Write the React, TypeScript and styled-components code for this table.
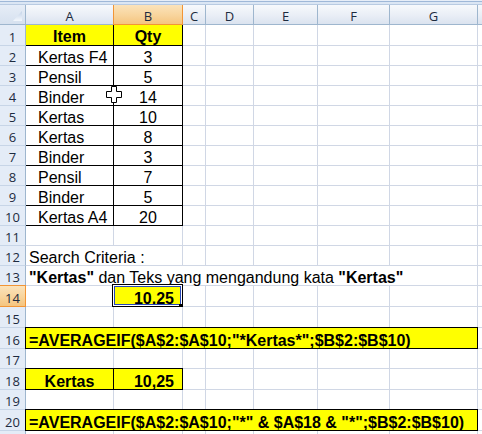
import React from 'react';
import styled, { createGlobalStyle, css } from 'styled-components';

const Global = createGlobalStyle`
  html, body { margin: 0; padding: 0; background: #fff; }
  body { width: 482px; height: 434px; overflow: hidden; }
`;

const ROW_H = [21, 20, 20, 20, 20, 20, 20, 20, 20, 20, 20, 20, 20, 21, 21, 21, 20, 21, 20, 21, 20];

const GRID = '#d0d7e5';
const HEAD_LINE = '#9eb6ce';
const SEL_LINE = '#f29536';
const SEL_BG = 'linear-gradient(180deg, #fbe3bb 0%, #f8d49c 55%, #f5c57f 100%)';

const Sheet = styled.div`
  position: relative;
  width: 482px;
  height: 434px;
  overflow: hidden;
  background: #fff;
`;

const TopStrip = styled.div`
  height: 5px;
  background: linear-gradient(
    180deg,
    #e7eef8 0px,
    #e7eef8 1px,
    #9fb8d8 1px,
    #9fb8d8 2px,
    #dbe6f4 2px,
    #dbe6f4 4px,
    #b9cbe2 4px,
    #b9cbe2 5px
  );
`;

const Grid = styled.div`
  display: grid;
  width: 498px;
  grid-template-columns: 26px 88px 69px 23px 48px 64px 72px 88px 20px;
  grid-template-rows: 20px ${ROW_H.map((h) => `${h}px`).join(' ')};
`;

const Corner = styled.div`
  box-sizing: border-box;
  border-right: 1px solid ${HEAD_LINE};
  border-bottom: 1px solid ${HEAD_LINE};
  background: linear-gradient(180deg, #e6edf7 0%, #d6e1ef 100%);
  display: flex;
  align-items: flex-end;
  justify-content: flex-end;
  padding: 0 3px 3px 0;
`;

const ColHead = styled.div<{ $active?: boolean }>`
  box-sizing: border-box;
  border-right: 1px solid ${(p) => (p.$active ? SEL_LINE : HEAD_LINE)};
  border-bottom: 1px solid ${(p) => (p.$active ? SEL_LINE : HEAD_LINE)};
  background: ${(p) =>
    p.$active ? SEL_BG : 'linear-gradient(180deg, #f7f9fc 0%, #e9eef6 55%, #dbe3ef 100%)'};
  ${(p) => p.$active && css`box-shadow: -1px 0 0 ${SEL_LINE};`}
  display: flex;
  align-items: center;
  justify-content: center;
  padding-top: 2px;
  font-family: 'Open Sans', 'Liberation Sans', sans-serif;
  font-size: 13px;
  color: #1d2b40;
`;

const RowHead = styled.div<{ $active?: boolean }>`
  box-sizing: border-box;
  border-right: 1px solid ${(p) => (p.$active ? SEL_LINE : HEAD_LINE)};
  border-bottom: 1px solid ${(p) => (p.$active ? SEL_LINE : '#c7d5e7')};
  background: ${(p) => (p.$active ? SEL_BG : '#e4ecf7')};
  ${(p) => p.$active && css`box-shadow: 0 -1px 0 ${SEL_LINE};`}
  display: flex;
  align-items: center;
  justify-content: center;
  padding-top: 3px;
  font-family: 'Open Sans', 'Liberation Sans', sans-serif;
  font-size: 13px;
  color: #1d2b40;
`;

type Align = 'left' | 'center' | 'right';

interface CellProps {
  $span?: number;
  $fill?: string;
  $bold?: boolean;
  $align?: Align;
  $pl?: number;
  $pr?: number;
  $pb?: number;
  $edge?: boolean;
  $edgeTop?: boolean;
  $edgeLeft?: boolean;
}

const Cell = styled.div<CellProps>`
  position: relative;
  grid-column: span ${(p) => p.$span ?? 1};
  box-sizing: border-box;
  min-width: 0;
  border-right: 1px solid ${(p) => (p.$edge ? '#000' : GRID)};
  border-bottom: 1px solid ${(p) => (p.$edge ? '#000' : GRID)};
  background: ${(p) => p.$fill ?? '#fff'};
  display: flex;
  align-items: flex-end;
  justify-content: ${(p) =>
    p.$align === 'center' ? 'center' : p.$align === 'right' ? 'flex-end' : 'flex-start'};
  padding: 0 ${(p) => p.$pr ?? 3}px ${(p) => p.$pb ?? 0}px ${(p) => p.$pl ?? 3}px;
  font-family: 'Liberation Sans', Arial, sans-serif;
  font-size: 16px;
  line-height: 15px;
  font-weight: ${(p) => (p.$bold ? 700 : 400)};
  color: #000;
  white-space: nowrap;
  ${(p) => {
    const s: string[] = [];
    if (p.$edgeTop) s.push('0 -1px 0 #000');
    if (p.$edgeLeft) s.push('-1px 0 0 #000');
    if (p.$edgeTop && p.$edgeLeft) s.push('-1px -1px 0 #000');
    return s.length ? css`box-shadow: ${s.join(', ')};` : '';
  }}
`;

const Strong = styled.b`
  font-weight: 700;
`;

const ActiveFrame = styled.div`
  position: absolute;
  left: -2px;
  top: -2px;
  right: -1px;
  bottom: -1px;
  border: 1px solid #000;
  box-shadow: inset 0 0 0 1px #fff, inset 0 0 0 2px #2747b8;
  pointer-events: none;
`;

const FillHandle = styled.span`
  position: absolute;
  right: -2px;
  bottom: -3px;
  width: 5px;
  height: 5px;
  background: #000;
`;

const Cursor = styled.svg`
  position: absolute;
  left: 106px;
  top: 86px;
  pointer-events: none;
`;

const YELLOW = '#ffff00';
const LETTERS = ['A', 'B', 'C', 'D', 'E', 'F', 'G', ''];

const items: [string, number][] = [
  ['Kertas F4', 3],
  ['Pensil', 5],
  ['Binder', 14],
  ['Kertas', 10],
  ['Kertas', 8],
  ['Binder', 3],
  ['Pensil', 7],
  ['Binder', 5],
  ['Kertas A4', 20],
];

const Blanks: React.FC<{ n: number; k: string }> = ({ n, k }) => (
  <>
    {Array.from({ length: n }, (_, i) => (
      <Cell key={`${k}-${i}`} />
    ))}
  </>
);

export default function App() {
  return (
    <Sheet>
      <Global />
      <TopStrip />
      <Grid>
        <Corner>
          <svg width="9" height="10" viewBox="0 0 9 10">
            <defs>
              <linearGradient id="tri" x1="0" y1="0" x2="0" y2="1">
                <stop offset="0" stopColor="#c3d3e8" />
                <stop offset="1" stopColor="#f3f7fc" />
              </linearGradient>
            </defs>
            <polygon points="9,0 9,10 0,10" fill="url(#tri)" />
          </svg>
        </Corner>
        {LETTERS.map((l, i) => (
          <ColHead key={`h${i}`} $active={l === 'B'}>
            {l}
          </ColHead>
        ))}

        {/* Row 1 */}
        <RowHead>1</RowHead>
        <Cell $fill={YELLOW} $bold $align="center" $pb={1} $edge>
          Item
        </Cell>
        <Cell $fill={YELLOW} $bold $align="center" $pb={1} $edge>
          Qty
        </Cell>
        <Blanks n={6} k="r1" />

        {/* Rows 2-10 */}
        {items.map(([name, qty], i) => (
          <React.Fragment key={`it${i}`}>
            <RowHead>{i + 2}</RowHead>
            <Cell $pl={12} $edge>
              {name}
            </Cell>
            <Cell $align="center" $edge>
              {qty}
            </Cell>
            <Blanks n={6} k={`r${i + 2}`} />
          </React.Fragment>
        ))}

        {/* Row 11 */}
        <RowHead>11</RowHead>
        <Blanks n={8} k="r11" />

        {/* Row 12 */}
        <RowHead>12</RowHead>
        <Cell $span={2}>Search Criteria :</Cell>
        <Blanks n={6} k="r12" />

        {/* Row 13 */}
        <RowHead>13</RowHead>
        <Cell $span={7}>
          <span>
            <Strong>"Kertas"</Strong> dan Teks yang mengandung kata <Strong>"Kertas"</Strong>
          </span>
        </Cell>
        <Blanks n={1} k="r13" />

        {/* Row 14 */}
        <RowHead $active>14</RowHead>
        <Cell />
        <Cell $fill={YELLOW} $bold $align="right" $pr={8}>
          10,25
          <ActiveFrame>
            <FillHandle />
          </ActiveFrame>
        </Cell>
        <Blanks n={6} k="r14" />

        {/* Row 15 */}
        <RowHead>15</RowHead>
        <Blanks n={8} k="r15" />

        {/* Row 16 */}
        <RowHead>16</RowHead>
        <Cell $span={7} $fill={YELLOW} $bold $edge $edgeTop $edgeLeft>
          =AVERAGEIF($A$2:$A$10;"*Kertas*";$B$2:$B$10)
        </Cell>
        <Blanks n={1} k="r16" />

        {/* Row 17 */}
        <RowHead>17</RowHead>
        <Blanks n={8} k="r17" />

        {/* Row 18 */}
        <RowHead>18</RowHead>
        <Cell $fill={YELLOW} $bold $align="center" $edge $edgeTop $edgeLeft>
          Kertas
        </Cell>
        <Cell $fill={YELLOW} $bold $align="right" $pr={8} $edge $edgeTop>
          10,25
        </Cell>
        <Blanks n={6} k="r18" />

        {/* Row 19 */}
        <RowHead>19</RowHead>
        <Blanks n={8} k="r19" />

        {/* Row 20 */}
        <RowHead>20</RowHead>
        <Cell $span={7} $fill={YELLOW} $bold $edge $edgeTop $edgeLeft>
          =AVERAGEIF($A$2:$A$10;"*" &amp; $A$18 &amp; "*";$B$2:$B$10)
        </Cell>
        <Blanks n={1} k="r20" />

        {/* Row 21 (only its top edge is in view) */}
        <RowHead />
        <Blanks n={8} k="r21" />
      </Grid>

      <Cursor width="16" height="17" viewBox="0 0 16 17">
        <path
          d="M5.5 0.5 H10.5 V5.5 H15.5 V11.5 H10.5 V16.5 H5.5 V11.5 H0.5 V5.5 H5.5 Z"
          fill="#fff"
          stroke="#000"
          strokeWidth="1"
        />
      </Cursor>
    </Sheet>
  );
}
